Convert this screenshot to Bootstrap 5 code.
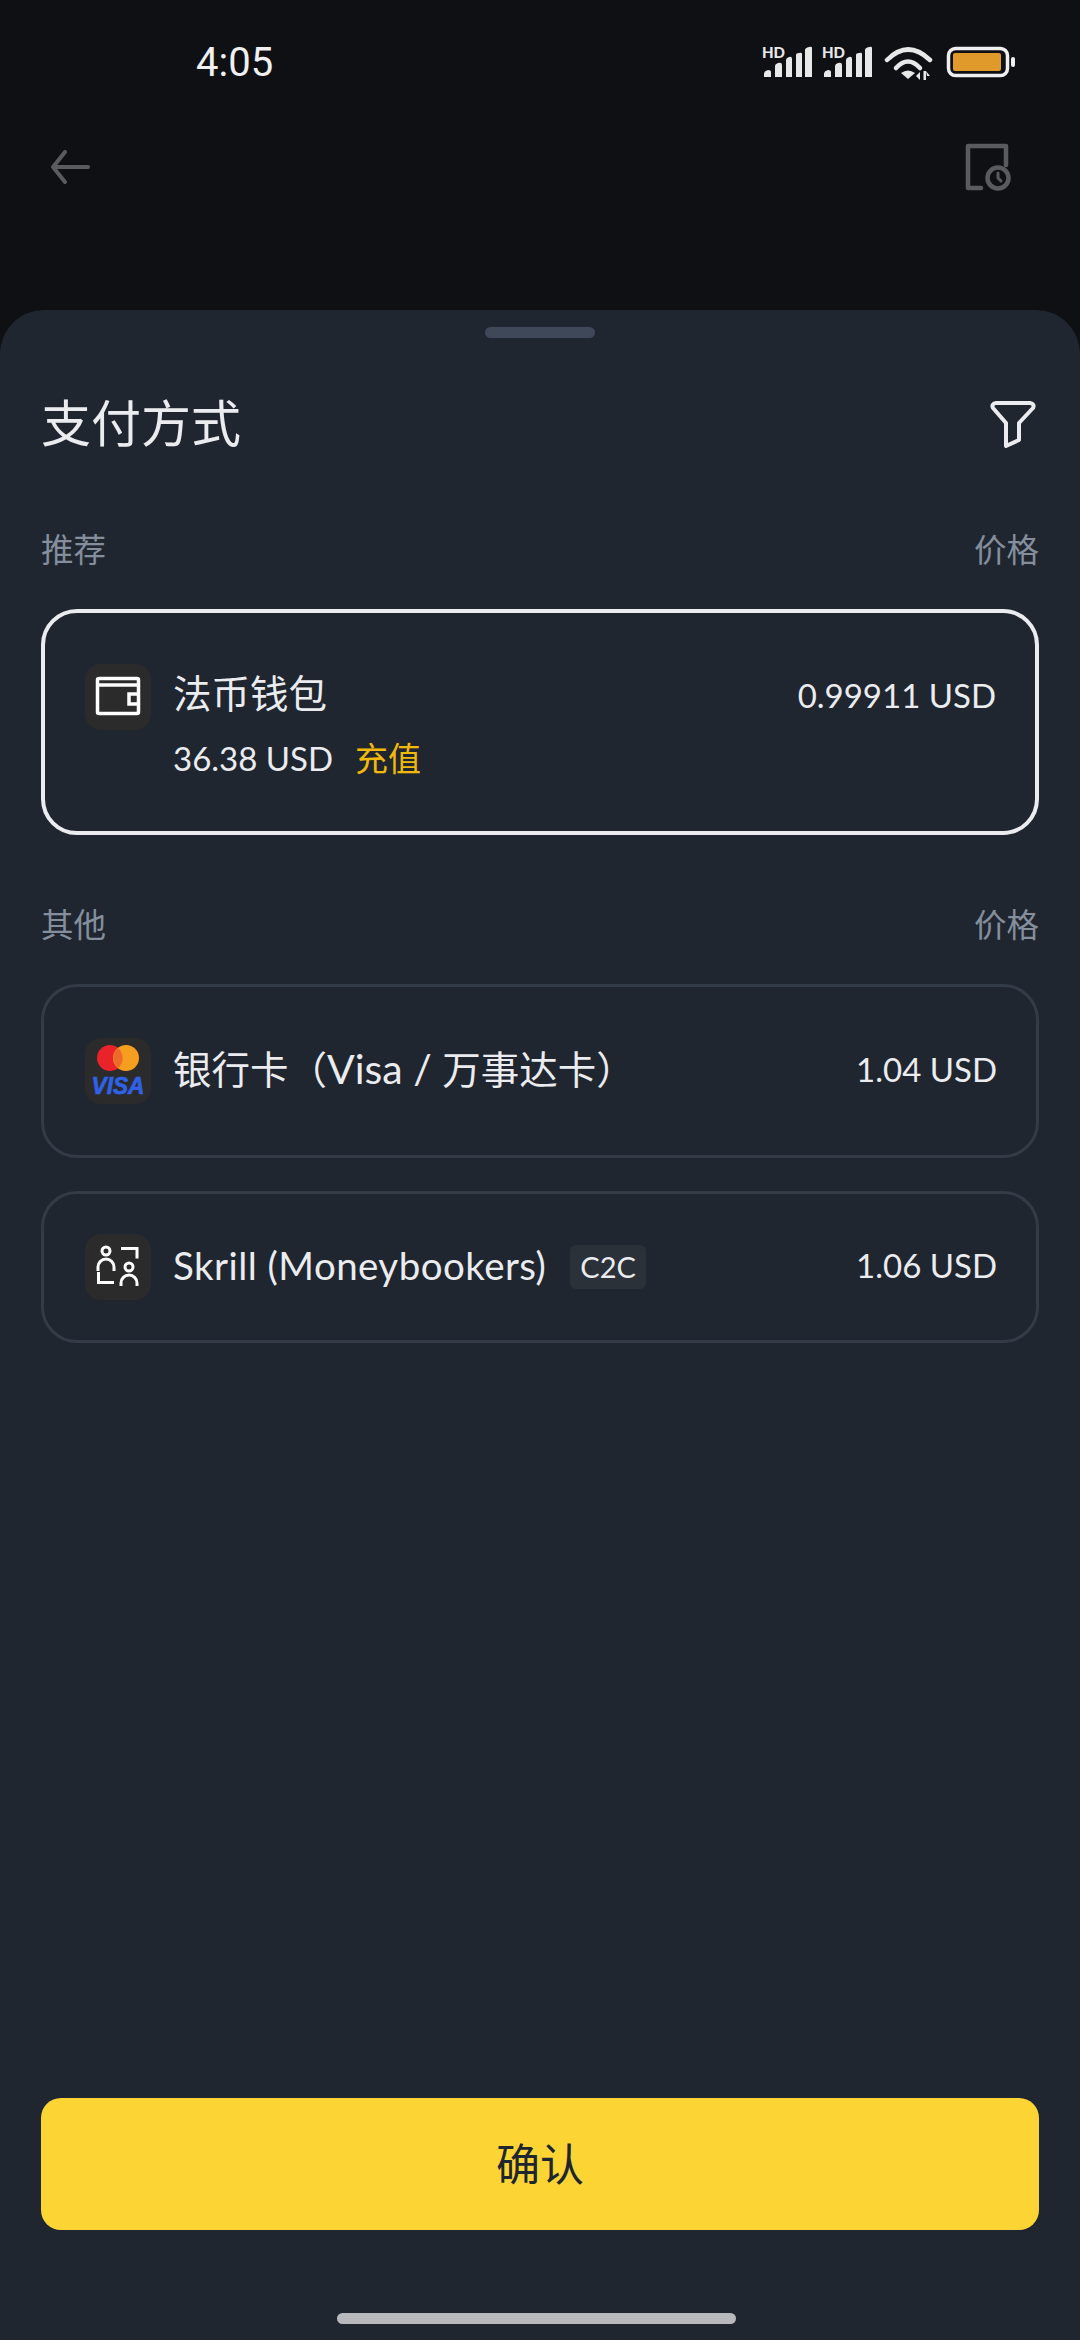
<!DOCTYPE html>
<html lang="zh-CN">

<head>
    <meta charset="UTF-8">
    <meta name="viewport" content="width=device-width, initial-scale=1.0">
    <title>支付方式</title>

    <link href="https://cdn.jsdelivr.net/npm/bootstrap@5.3.3/dist/css/bootstrap.min.css" rel="stylesheet">
    <script src="https://cdn.jsdelivr.net/npm/bootstrap@5.3.3/dist/js/bootstrap.bundle.min.js"></script>

    <style>
        body {
            background: #0e1014;
            font-family: "Lato", "Noto Sans CJK SC", sans-serif;
            color: #eaecef;
            width: 1080px;
            height: 2340px;
            overflow: hidden;
        }

        .status-row { height: 120px; padding: 44px 65px 0 196px; }
        .status-time { font-family: "Roboto", sans-serif; font-size: 40px; line-height: 32px; margin-top: 3px; color: #f0f0f0; }
        .top-row { height: 190px; padding: 23px 69px 0 50px; }
        .back-arrow { margin-top: 7px; }

        .sheet { background: #202630; border-radius: 44px 44px 0 0; height: 2030px; padding: 17px 41px 0; }
        .sheet-handle { width: 110px; height: 11px; border-radius: 6px; background: #3f4859; margin: 0 auto; }
        .sheet-title { height: 64px; margin-top: 53px; font-size: 50px; font-weight: 400; line-height: 62px; padding-right: 3px; }
        .filter-icon { margin-top: 2px; }
        .group-label { height: 44px; line-height: 44px; font-size: 32.500px; color: #848e9c; margin-top: 73px; }
        .group-label.second { margin-top: 68px; }

        .pay-card { background: transparent; color: #eaecef; border: 3px solid #333b47; border-radius: 36px; margin-top: 37px; }
        .pay-card.picked { border: 4px solid #eaecef; height: 226px; padding: 51px 39px 0 40px; }
        .pay-card.bank { height: 174px; padding: 0 39px 0 41px; }
        .pay-card.skrill { height: 152px; margin-top: 33px; padding: 0 39px 0 41px; }

        .icon-box { width: 66px; height: 66px; border-radius: 16px; background: #2b2b2b; flex: none; }
        .pay-name { font-size: 38.500px; line-height: 58px; font-weight: 400; margin-left: 22px; margin-bottom: 4px; }
        .latin-wide { font-size: 41px; }
        .latin-spaced { letter-spacing: .45px; }
        .pay-price { font-size: 33px; line-height: 58px; }
        .pay-balance { font-size: 33px; line-height: 44px; margin-top: 10px; margin-left: 22px; }
        .top-up { color: #f0b90b; margin-left: 22px; }
        .tag-c2c { background: #2b3139; color: #eaecef; font-size: 29px; font-weight: 400; line-height: 44px; padding: 0 10px; border-radius: 6px; margin-left: 24px; }

        .confirm-btn { background: #fcd535; color: #202630; border: 0; border-radius: 20px; height: 132px; font-size: 44px; font-weight: 400; margin-top: 755px; }
        .confirm-btn:hover { background: #fcd535; color: #202630; }
        .home-bar { width: 399px; height: 11px; border-radius: 6px; background: #b7b9bd; margin: 83px 0 0 296px; }
    </style>
</head>

<body>
    <div class="status-row d-flex justify-content-between align-items-start">
        <span class="status-time">4:05</span>
        <svg width="253" height="38" viewBox="0 0 253 38" fill="#e8e8e8">
            <text x="0" y="14" font-family="Lato, sans-serif" font-size="15" font-weight="900" textLength="23" lengthAdjust="spacingAndGlyphs">HD</text>
            <path d="M2 33v-3q0-3 4-4 3 0 3 2v5zM13 33V22q0-2 3-3 4-1 4 2v12zM24 33V16q0-2 3-3 3-1 3 2v18zM34 33V11q0-2 3-2 3-1 3 1v23zM43 33V6q0-2 4-3 3-1 3 1v29z"/>
            <text x="60" y="14" font-family="Lato, sans-serif" font-size="15" font-weight="900" textLength="23" lengthAdjust="spacingAndGlyphs">HD</text>
            <path d="M62 33v-3q0-3 4-4 3 0 3 2v5zM73 33V22q0-2 3-3 4-1 4 2v12zM84 33V16q0-2 3-3 3-1 3 2v18zM94 33V11q0-2 3-2 3-1 3 1v23zM103 33V6q0-2 4-3 3-1 3 1v29z"/>
            <g fill="none" stroke="#e8e8e8" stroke-width="4.500" stroke-linecap="round">
                <path d="M125 16q21-21 43 0"/>
                <path d="M134 24q12-13 24 0"/>
            </g>
            <path d="M139 29q7-5 14 0l-7 6z"/>
            <path d="M158 36v-8l-4 4zM164 27v9h-2.500v-9zM164 27l4 5h-3z"/>
            <rect x="186.500" y="4.500" width="59" height="27" rx="7" fill="none" stroke="#efefef" stroke-width="3.500"/>
            <rect x="191" y="9" width="48" height="18" rx="2" fill="#e09a2b"/>
            <rect x="249" y="13" width="4" height="10" rx="2" fill="#efefef"/>
        </svg>
    </div>

    <div class="top-row d-flex justify-content-between align-items-start">
        <svg class="back-arrow" width="40" height="34" viewBox="0 0 40 34" fill="none" stroke="#595b5f" stroke-width="4" stroke-linecap="round" stroke-linejoin="round">
            <path d="M38 17H3M15 2L3 17l12 15"/>
        </svg>
        <svg width="46" height="48" viewBox="0 0 46 48" fill="none" stroke="#595b5f" stroke-width="4.500" stroke-linejoin="round" stroke-linecap="round">
            <path d="M16 45H3V3h38v19"/>
            <circle cx="33" cy="35" r="10.500"/>
            <path d="M33 30v5l3 3" stroke-width="3"/>
        </svg>
    </div>

    <div class="sheet">
        <div class="sheet-handle"></div>

        <div class="sheet-title d-flex justify-content-between align-items-center">
            <span>支付方式</span>
            <svg class="filter-icon" width="46" height="48" viewBox="0 0 46 48" fill="none" stroke="#eaecef" stroke-width="4" stroke-linejoin="round" stroke-linecap="round">
                <path d="M6 3h34q5 1 3 5L29 23v17l-13 6V23L3 8Q1 4 6 3z"/>
            </svg>
        </div>

        <div class="group-label d-flex justify-content-between"><span>推荐</span><span>价格</span></div>

        <div class="card pay-card picked d-flex flex-row align-items-start">
            <div class="icon-box">
                <svg width="66" height="66" viewBox="0 0 66 66" fill="none" stroke="#fff" stroke-width="3.500">
                    <rect x="12.500" y="14.500" width="41" height="35" rx="1.500"/>
                    <path d="M13 21h40M54 30H44v10h10"/>
                </svg>
            </div>
            <div class="flex-grow-1">
                <div class="d-flex justify-content-between align-items-center">
                    <span class="pay-name">法币钱包</span>
                    <span class="pay-price">0.99911 USD</span>
                </div>
                <div class="pay-balance">36.38 USD<span class="top-up">充值</span></div>
            </div>
        </div>

        <div class="group-label second d-flex justify-content-between"><span>其他</span><span>价格</span></div>

        <div class="card pay-card bank d-flex flex-row align-items-center">
            <div class="icon-box">
                <svg width="66" height="66" viewBox="0 0 66 66">
                    <circle cx="25" cy="20" r="13" fill="#e8232a"/>
                    <circle cx="41" cy="20" r="13" fill="#f59e20"/>
                    <path d="M33 10a13 13 0 0 1 0 20 13 13 0 0 1 0-20z" fill="#ee6a2b"/>
                    <text x="33" y="56" text-anchor="middle" font-family="Liberation Sans, sans-serif" font-size="24" font-weight="700" font-style="italic" fill="#2f62e6" stroke="#2f62e6" stroke-width=".7" textLength="53" lengthAdjust="spacingAndGlyphs">VISA</text>
                </svg>
            </div>
            <span class="pay-name flex-grow-1">银行卡（<span class="latin-wide">Visa / </span>万事达卡）</span>
            <span class="pay-price mb-1">1.04 USD</span>
        </div>

        <div class="card pay-card skrill d-flex flex-row align-items-center">
            <div class="icon-box">
                <svg width="66" height="66" viewBox="0 0 66 66" fill="none" stroke="#fff" stroke-width="3">
                    <circle cx="21" cy="17" r="4"/>
                    <path d="M13 37v-4a8 8 0 0 1 16 0v4"/>
                    <path d="M36 14.500h16v10"/>
                    <circle cx="44" cy="33" r="4"/>
                    <path d="M36 52v-3a8 8 0 0 1 16 0v3"/>
                    <path d="M13.500 38v10.500h15.500"/>
                </svg>
            </div>
            <span class="pay-name latin-spaced">Skrill (Moneybookers)</span>
            <span class="badge tag-c2c">C2C</span>
            <span class="pay-price ms-auto mb-1">1.06 USD</span>
        </div>

        <button type="button" class="btn confirm-btn w-100 d-block">确认</button>
        <div class="home-bar"></div>
    </div>
</body>

</html>
